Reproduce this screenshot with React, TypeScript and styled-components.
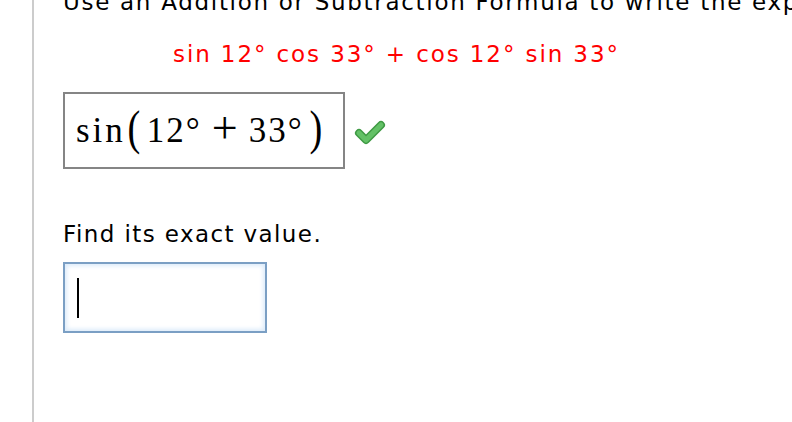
import React from 'react';
import styled, { createGlobalStyle } from 'styled-components';

const GlobalStyle = createGlobalStyle`
  html, body {
    margin: 0;
    padding: 0;
    background: #fff;
    overflow: hidden;
  }
  body {
    font-family: 'DejaVu Sans', Verdana, sans-serif;
  }
`;

const Page = styled.div`
  width: 792px;
  height: 422px;
  overflow: hidden;
  padding-left: 32px;
  box-sizing: border-box;
`;

const Question = styled.div`
  display: flow-root;
  height: 100%;
  border-left: 2px solid #cccccc;
  padding-left: 29px;
`;

const Text = styled.p<{ spacing: number; indent?: number; top: number }>`
  margin: ${(p) => p.top}px 0 0;
  padding-left: ${(p) => p.indent || 0}px;
  font-size: 23px;
  line-height: 27px;
  letter-spacing: ${(p) => p.spacing}px;
  color: #000;
  white-space: nowrap;
`;

const Given = styled(Text)`
  color: #ff0000;
`;

const AnswerRow = styled.div`
  display: flex;
  align-items: flex-start;
  gap: 7px;
  margin-top: 24px;
`;

const MathBox = styled.div`
  box-sizing: border-box;
  width: 282px;
  height: 77px;
  border: 2px solid #858585;
  display: flex;
  align-items: center;
  padding-left: 11px;
  font-family: 'Liberation Serif', 'Times New Roman', serif;
  color: #000;
  white-space: nowrap;
`;

// one piece of the typeset expression: a word, a number, an operator
const MathToken = styled.span<{ gap?: number; size?: number; spacing?: number }>`
  display: inline-block;
  margin-left: ${(p) => p.gap || 0}px;
  font-size: ${(p) => p.size || 35}px;
  line-height: 1;
  letter-spacing: ${(p) => p.spacing || 0}px;
`;

const Operator = styled(MathToken)`
  transform: translateY(-3px);
`;

const Paren = styled(MathToken)`
  font-size: 48px;
  transform: translateY(-3px) scaleX(0.8);
`;

const CheckIcon = styled.svg`
  margin-top: 24px;
  flex: none;
`;

const AnswerInput = styled.div`
  box-sizing: border-box;
  margin-top: 14px;
  width: 204px;
  height: 71px;
  border: 2px solid #7b9fc4;
  box-shadow: inset 0 0 4px 2px #dcebfa;
  padding: 14px 0 0 12px;
  background: #fff;
`;

const Caret = styled.div`
  width: 2px;
  height: 40px;
  background: #000;
`;

const CheckMark: React.FC = () => (
  <CheckIcon width="36" height="30" viewBox="0 0 36 30">
    <polyline
      points="7,17 14,24 29,9"
      fill="none"
      stroke="#3f9a44"
      strokeWidth="8"
      strokeLinecap="round"
      strokeLinejoin="round"
    />
    <polyline
      points="7,17 14,24 29,9"
      fill="none"
      stroke="#63c166"
      strokeWidth="5"
      strokeLinecap="round"
      strokeLinejoin="round"
    />
  </CheckIcon>
);

const App: React.FC = () => (
  <Page>
    <GlobalStyle />
    <Question>
      <Text top={-11} spacing={1.7}>
        Use an Addition or Subtraction Formula to write the expression as a
        trigonometric function of one number.
      </Text>
      <Given top={25} indent={110} spacing={1.9}>
        sin 12° cos 33° + cos 12° sin 33°
      </Given>
      <AnswerRow>
        <MathBox>
          <MathToken spacing={3}>sin</MathToken>
          <Paren>(</Paren>
          <MathToken gap={5} spacing={2}>
            12°
          </MathToken>
          <Operator gap={10} size={46}>
            +
          </Operator>
          <MathToken gap={11} spacing={2}>
            33°
          </MathToken>
          <Paren gap={4}>)</Paren>
        </MathBox>
        <CheckMark />
      </AnswerRow>
      <Text top={52} spacing={1.4}>
        Find its exact value.
      </Text>
      <AnswerInput>
        <Caret />
      </AnswerInput>
    </Question>
  </Page>
);

export default App;
